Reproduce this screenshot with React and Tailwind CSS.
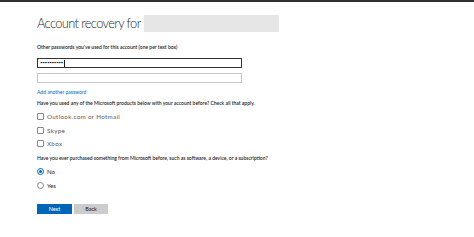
export default function App() {
  const font = { fontFamily: 'Lato, "Open Sans", sans-serif' };
  return (
    <div className="w-[474px] h-[237px] bg-white overflow-hidden" style={font}>
      <div className="h-[2px] bg-[#2f2f2f]" />
      <div className="pl-[37px] flex flex-col items-start">
        <div className="mt-[13px] flex items-center h-[17px]">
          <span className="text-[12.8px] leading-[17px] font-light text-[#1b1b1b] tracking-[-0.6px]">Account recovery for</span>
          <div className="ml-[3px] w-[135px] h-[17px] bg-[#e6e6e6]" />
        </div>
        <div className="mt-[12px] text-[5px] leading-[6px] text-[#1b1b1b] font-semibold">
          Other passwords you've used for this account (one per text box)
        </div>
        <div className="mt-[8px] w-[205px] h-[10px] border border-[#333] flex items-center pl-[2px]">
          <span className="text-[4.5px] leading-[6px] text-[#1b1b1b] tracking-[-0.3px]">••••••••••</span>
          <span className="w-px h-[7px] bg-[#1b1b1b] ml-[1px]" />
        </div>
        <div className="mt-[5px] w-[205px] h-[10px] border border-[#c8c8c8]" />
        <div className="mt-[6px] text-[5px] leading-[6px] text-[#0067b8]">Add another password</div>
        <div className="mt-[5px] text-[5px] leading-[6px] text-[#1b1b1b] font-semibold">
          Have you used any of the Microsoft products below with your account before? Check all that apply.
        </div>
        <div className="mt-[7px] flex flex-col gap-[6.5px]">
          {['Outlook.com or Hotmail', 'Skype', 'Xbox'].map((t) => (
            <div key={t} className="flex items-center h-[7px]">
              <div className="w-[7px] h-[7px] border border-[#8a8a8a] rounded-[1px] bg-white" />
              <span className="ml-[3px] text-[6.3px] leading-[7px] text-[#5a5a5a] tracking-[0.3px]">{t}</span>
            </div>
          ))}
        </div>
        <div className="mt-[8px] text-[5px] leading-[6px] text-[#1b1b1b] font-semibold">
          Have you ever purchased something from Microsoft before, such as software, a device, or a subscription?
        </div>
        <div className="mt-[7px] flex flex-col gap-[7px]">
          <div className="flex items-center h-[7px]">
            <div className="w-[7px] h-[7px] rounded-full border border-[#0067b8] flex items-center justify-center">
              <div className="w-[3.5px] h-[3.5px] rounded-full bg-[#0067b8]" />
            </div>
            <span className="ml-[3px] text-[6px] leading-[7px] text-[#1b1b1b]">No</span>
          </div>
          <div className="flex items-center h-[7px]">
            <div className="w-[7px] h-[7px] rounded-full border border-[#8a8a8a]" />
            <span className="ml-[3px] text-[6px] leading-[7px] text-[#1b1b1b]">Yes</span>
          </div>
        </div>
        <div className="mt-[15px] flex gap-[2px]">
          <div className="w-[35px] h-[10px] bg-[#0067b8] text-white text-[5.5px] flex items-center justify-center">Next</div>
          <div className="w-[34px] h-[10px] bg-[#cccccc] text-[#1b1b1b] text-[5.5px] flex items-center justify-center">Back</div>
        </div>
      </div>
    </div>
  );
}
